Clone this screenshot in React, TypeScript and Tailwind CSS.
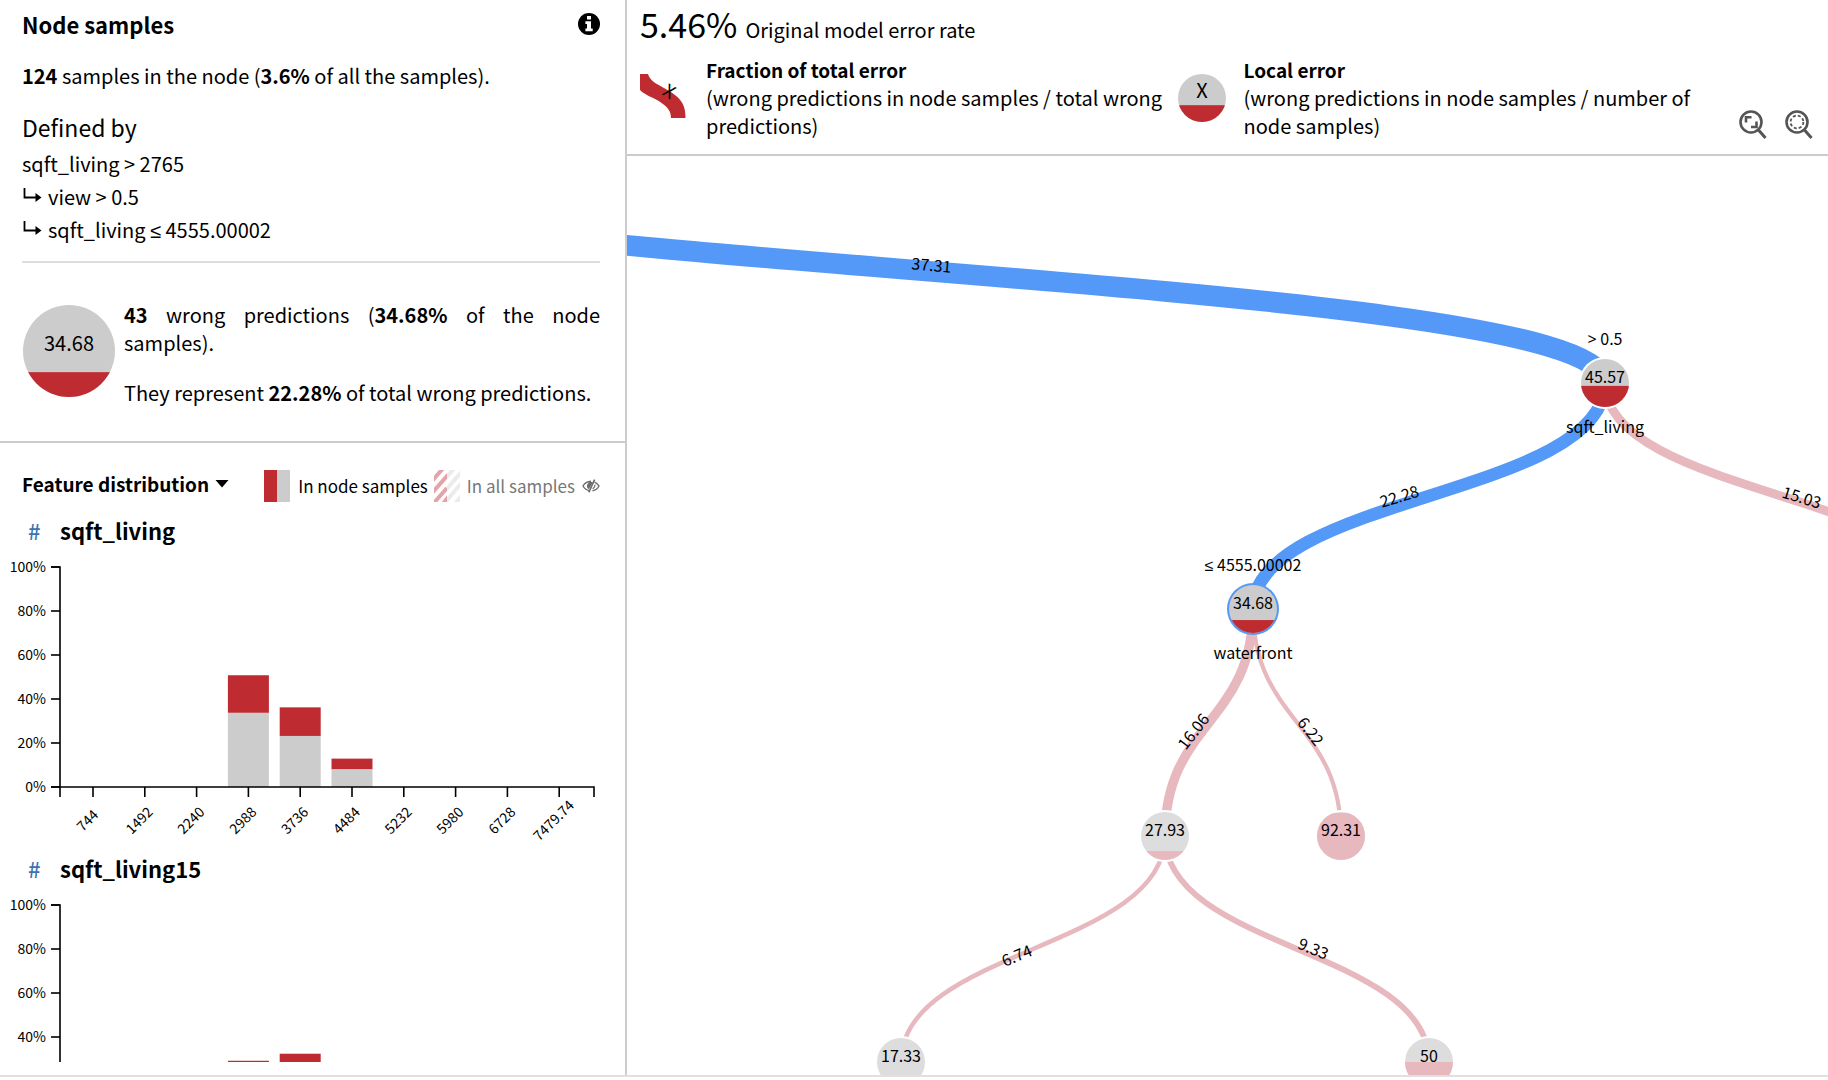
import React from "react";

const RED = "#be2c31";
const GREY = "#cccccc";
const BLUE = "#5499f7";
const PINK = "#e8b8bf";
const PALE = "#dddddd";

/* ---------- shared drawings ---------- */

type GaugeProps = {
  cx: number;
  cy: number;
  r: number;
  level: number;
  id: string;
  faded?: boolean;
};

function Gauge({ cx, cy, r, level, id, faded }: GaugeProps) {
  const top = cy + r - level * 2 * r;
  return (
    <g>
      <clipPath id={id}>
        <circle cx={cx} cy={cy} r={r} />
      </clipPath>
      <circle cx={cx} cy={cy} r={r} fill={faded ? PALE : GREY} />
      <rect
        x={cx - r}
        y={top}
        width={2 * r}
        height={level * 2 * r}
        fill={faded ? PINK : RED}
        clipPath={`url(#${id})`}
      />
    </g>
  );
}

function InfoIcon() {
  return (
    <svg viewBox="0 0 22 22" className="size-[22px]" aria-hidden="true">
      <circle cx="11" cy="11" r="11" fill="#000" />
      <path
        fill="#fff"
        d="M9 3h4v3.4H9zM7.4 8.2H13v7.2h1.7v2.8H7.4v-2.8H9V11H7.4z"
      />
    </svg>
  );
}

function BranchArrow() {
  return (
    <svg viewBox="0 0 20 14" className="-mt-1 h-[14px] w-[20px]" aria-hidden="true">
      <path d="M2.500 0v9.500H14" fill="none" stroke="#000" strokeWidth="1.800" />
      <path d="M13.500 5l6 4.500-6 4.500z" fill="#000" />
    </svg>
  );
}

function HalfEyeIcon() {
  return (
    <svg viewBox="0 0 18 14" className="h-[14px] w-[18px]" aria-hidden="true">
      <path
        d="M8 11.7C4.700 11.400 2.300 9.500 1 7c1.500-2.700 4.300-4.500 8-4.700M12.600 3.100C14.600 3.900 16.100 5.300 17 7c-1.300 2.500-3.500 4.200-6.500 4.700"
        fill="none"
        stroke="#6b6b6b"
        strokeWidth="1.400"
      />
      <path d="M10.800 3.300A4 4 0 0 0 6.800 10.200z" fill="#6b6b6b" />
      <path d="M12.600 .7L6.800 13.300" stroke="#6b6b6b" strokeWidth="1.600" />
      <path d="M13 5.600c.1 2-.8 3.300-2.400 4" fill="none" stroke="#6b6b6b" strokeWidth="1.200" />
    </svg>
  );
}

function ZoomFitIcon() {
  return (
    <svg viewBox="0 0 28 30" className="h-[30px] w-[28px]" aria-hidden="true">
      <g fill="none" stroke="#555" strokeWidth="2.600">
        <circle cx="12" cy="12" r="10.500" />
        <path d="M19.500 20l7 8" strokeWidth="3" />
        <path d="M7 12.500V7.200h5.500M17.500 11.500v5.500H12" />
      </g>
    </svg>
  );
}

function ZoomSelectionIcon() {
  return (
    <svg viewBox="0 0 28 30" className="h-[30px] w-[28px]" aria-hidden="true">
      <g fill="none" stroke="#555" strokeWidth="2.600">
        <circle cx="12" cy="12" r="10.500" />
        <path d="M19.500 20l7 8" strokeWidth="3" />
        <circle cx="12" cy="12" r="6.400" strokeWidth="1.800" strokeDasharray="3 2.030" />
      </g>
    </svg>
  );
}

/* ---------- left panel ---------- */

const BINS = ["744", "1492", "2240", "2988", "3736", "4484", "5232", "5980", "6728", "7479.74"];
const PERCENTS = [100, 80, 60, 40, 20, 0];

type Bar = { bin: number; total: number; right: number };

function Histogram({ name, bars }: { name: string; bars: Bar[] }) {
  const y = (p: number) => 228 - p * 2.2;
  const x = (i: number) => 93 + i * 51.8;
  return (
    <section>
      <h3 className="flex h-7 items-center gap-[17px] pl-7 text-[22px] font-bold leading-7">
        <span className="w-[15px] font-medium text-[#3b74b0]">#</span>
        {name}
      </h3>
      <svg className="mt-[15px] h-[295px] w-full overflow-visible" role="img" aria-label={`${name} distribution`}>
        {bars.map((b) => (
          <g key={b.bin}>
            <rect x={x(b.bin) - 20.5} y={y(b.total)} width="41" height={(b.total - b.right) * 2.2} fill={RED} />
            <rect x={x(b.bin) - 20.5} y={y(b.right)} width="41" height={b.right * 2.2} fill={GREY} />
          </g>
        ))}
        <path d="M51 8h9v220H51" fill="none" stroke="#000" strokeWidth="1.600" />
        <path d="M60 238v-10h534v10" fill="none" stroke="#000" strokeWidth="1.600" />
        {PERCENTS.map((p) => (
          <g key={p}>
            <path d={`M51 ${y(p)}h9`} stroke="#000" strokeWidth="1.600" />
            <text x="46" y={y(p) + 5} textAnchor="end" fontSize="14">
              {p}%
            </text>
          </g>
        ))}
        {BINS.map((b, i) => (
          <g key={b}>
            <path d={`M${x(i)} 228v10`} stroke="#000" strokeWidth="1.600" />
            <text textAnchor="middle" fontSize="14" transform={`translate(${x(i) - 2} 265) rotate(-45)`}>
              {b}
            </text>
          </g>
        ))}
      </svg>
    </section>
  );
}

function SidePanel() {
  return (
    <aside className="flex w-[627px] shrink-0 flex-col border-r-2 border-[#cccccc]">
      <div className="border-b-2 border-[#cccccc] pt-[10px] pr-[25px] pb-[34px] pl-[22px]">
        <div className="flex h-7 items-center justify-between">
          <h2 className="text-[22px] font-bold leading-7">Node samples</h2>
          <button type="button" aria-label="About node samples">
            <InfoIcon />
          </button>
        </div>
        <p className="mt-6">
          <b>124</b> samples in the node (<b>3.6%</b> of all the samples).
        </p>
        <h3 className="mt-[23px] text-[23px] leading-7">Defined by</h3>
        <ul className="mt-[6px] leading-[33px]">
          <li>sqft_living &gt; 2765</li>
          <li className="flex items-center gap-[6px]">
            <BranchArrow />
            view &gt; 0.5
          </li>
          <li className="flex items-center gap-[6px]">
            <BranchArrow />
            <span>
              sqft_living <span className="font-['Noto_Sans',sans-serif] leading-none">≤</span> 4555.00002
            </span>
          </li>
        </ul>
        <hr className="mt-[15px] border-t-2 border-[#dddddd]" />
        <div className="mt-[38px] flex gap-2">
          <svg viewBox="0 0 94 94" className="mt-[3px] size-[94px] shrink-0" role="img" aria-label="34.68% local error">
            <Gauge id="summary" cx={47} cy={47} r={46} level={0.27} />
            <text x="47" y="47" textAnchor="middle" fontSize="20">
              34.68
            </text>
          </svg>
          <div className="flex-1 space-y-[22px] text-justify">
            <p>
              <b>43</b> wrong predictions (<b>34.68%</b> of the node samples).
            </p>
            <p>
              They represent <b>22.28%</b> of total wrong predictions.
            </p>
          </div>
        </div>
      </div>
      <div className="flex h-[73px] items-center justify-between pt-2 pr-[25px] pl-[22px]">
        <button type="button" className="flex items-center gap-[6px] text-[19px] font-bold">
          Feature distribution
          <svg viewBox="0 0 14 8" className="h-2 w-[14px]" aria-hidden="true">
            <path d="M.5 0h13L7 7.500z" />
          </svg>
        </button>
        <div className="flex items-center gap-[6px] pt-1 text-[17px]">
          <span className="flex items-center gap-2">
            <svg viewBox="0 0 26 32" className="h-8 w-[26px]" aria-hidden="true">
              <path d="M0 0h13v32H0z" fill={RED} />
              <path d="M13 0h13v32H13z" fill={GREY} />
            </svg>
            In node samples
          </span>
          <button type="button" className="flex items-center gap-[7px] text-[#777777]">
            <svg viewBox="0 0 26 32" className="h-8 w-[26px]" aria-hidden="true">
              <defs>
                <clipPath id="halfA">
                  <path d="M0 0h13v32H0z" />
                </clipPath>
                <clipPath id="halfB">
                  <path d="M13 0h13v32H13z" />
                </clipPath>
              </defs>
              <path
                d="M-2 11L11 -4M-2 23L20 -2M-2 35L13 18M8 35L15 26"
                stroke="#e3a3a9"
                strokeWidth="4"
                clipPath="url(#halfA)"
              />
              <path
                d="M11 9L22 -4M10 22L30 -1M8 36L30 10M20 35L30 23"
                stroke="#ebebeb"
                strokeWidth="4"
                clipPath="url(#halfB)"
              />
            </svg>
            In all samples
            <HalfEyeIcon />
          </button>
        </div>
      </div>
      <div className="mb-[13px] min-h-0 flex-1 overflow-hidden">
        <Histogram
          name="sqft_living"
          bars={[
            { bin: 3, total: 50.8, right: 33.7 },
            { bin: 4, total: 36.2, right: 23.2 },
            { bin: 5, total: 12.9, right: 8 },
          ]}
        />
        <Histogram
          name="sqft_living15"
          bars={[
            { bin: 3, total: 29.2, right: 18 },
            { bin: 4, total: 32.4, right: 20 },
          ]}
        />
      </div>
    </aside>
  );
}

/* ---------- tree ---------- */

type TreeNode = {
  id: string;
  x: number;
  y: number;
  value?: string;
  level?: number;
  sign?: string;
  threshold?: string;
  split?: string;
  faded?: boolean;
  selected?: boolean;
};

const NODES: TreeNode[] = [
  { id: "root", x: -405, y: 1 },
  { id: "a", x: 978, y: 227, value: "45.57", level: 0.44, sign: ">", threshold: "0.5", split: "sqft_living" },
  { id: "b", x: 626, y: 453, value: "34.68", level: 0.27, sign: "≤", threshold: "4555.00002", split: "waterfront", selected: true },
  { id: "g", x: 1330, y: 453 },
  { id: "c", x: 538, y: 680, value: "27.93", level: 0.185, faded: true },
  { id: "d", x: 714, y: 680, value: "92.31", level: 0.98, faded: true },
  { id: "e", x: 274, y: 906, value: "17.33", level: 0.08, faded: true },
  { id: "f", x: 802, y: 906, value: "50", level: 0.5, faded: true },
];

type Link = { from: string; to: string; value: string; x: number; y: number; angle: number; active?: boolean };

const LINKS: Link[] = [
  { from: "root", to: "a", value: "37.31", x: 304, y: 115, angle: 5, active: true },
  { from: "a", to: "b", value: "22.28", x: 774, y: 346, angle: -17, active: true },
  { from: "a", to: "g", value: "15.03", x: 1173, y: 347, angle: 17 },
  { from: "b", to: "c", value: "16.06", x: 571, y: 579, angle: -52 },
  { from: "b", to: "d", value: "6.22", x: 679, y: 579, angle: 52 },
  { from: "c", to: "e", value: "6.74", x: 392, y: 805, angle: -23 },
  { from: "c", to: "f", value: "9.33", x: 684, y: 798, angle: 23 },
];

const find = (id: string) => NODES.find((n) => n.id === id)!;

function Tree() {
  return (
    <svg className="block size-full" role="img" aria-label="Error tree" fontSize="16">
      {LINKS.map((l) => {
        const s = find(l.from);
        const t = find(l.to);
        const m = (s.y + t.y) / 2;
        return (
          <path
            key={l.to}
            d={`M${s.x} ${s.y}C${s.x} ${m} ${t.x} ${m} ${t.x} ${t.y}`}
            fill="none"
            stroke={l.active ? BLUE : PINK}
            strokeWidth={Number(l.value) * 0.53 + 0.9}
          />
        );
      })}
      {LINKS.map((l) => (
        <text key={l.to} textAnchor="middle" transform={`translate(${l.x} ${l.y}) rotate(${l.angle})`}>
          {l.value}
        </text>
      ))}
      {NODES.filter((n) => n.value).map((n) => (
        <g key={n.id}>
          <circle cx={n.x} cy={n.y} r="26" fill={n.selected ? BLUE : "#fff"} />
          <Gauge id={n.id} cx={n.x} cy={n.y} r={24} level={n.level ?? 0} faded={n.faded} />
          <text x={n.x} y={n.y} textAnchor="middle">
            {n.value}
          </text>
          {n.threshold && (
            <text x={n.x} y={n.y - 38} textAnchor="middle">
              <tspan className="font-['Noto_Sans',sans-serif]">{n.sign}</tspan> {n.threshold}
            </text>
          )}
          <text x={n.x} y={n.y + 50} textAnchor="middle">
            {n.split}
          </text>
        </g>
      ))}
    </svg>
  );
}

function TreeHeader() {
  return (
    <header className="border-b-2 border-[#cccccc] pb-[14px] pl-[13px]">
      <p className="flex items-baseline gap-2 pt-[2px]">
        <span className="text-[34px] leading-[44px]">5.46%</span>
        <span>Original model error rate</span>
      </p>
      <div className="mt-[10px] flex items-end pr-[15px]">
        <div className="flex flex-1 items-center gap-5 self-start">
          <svg viewBox="0 0 46 44" className="mb-1 h-11 w-[46px] shrink-0 overflow-visible" aria-hidden="true">
            <path
              d="M0 0h8C10 7 17 10 24 14C38 22 46 28 45.500 44H31C31 35 25 31 17 26C9 22 4 20 0 16z"
              fill={RED}
            />
            <text textAnchor="middle" fontSize="18" transform="translate(26 23) rotate(31)">
              X
            </text>
          </svg>
          <p>
            <b className="block text-[19px]">Fraction of total error</b>
            (wrong predictions in node samples / total wrong predictions)
          </p>
        </div>
        <div className="flex flex-1 items-center gap-[18px] self-start">
          <svg viewBox="0 0 48 48" className="size-12 shrink-0" aria-hidden="true">
            <Gauge id="legend" cx={24} cy={24} r={24} level={0.35} />
            <text x="24" y="24" textAnchor="middle" fontSize="20">
              X
            </text>
          </svg>
          <p>
            <b className="block text-[19px]">Local error</b>
            (wrong predictions in node samples / number of node samples)
          </p>
        </div>
        <div className="ml-6 flex gap-[18px]">
          <button type="button" aria-label="Zoom to fit">
            <ZoomFitIcon />
          </button>
          <button type="button" aria-label="Zoom to selection">
            <ZoomSelectionIcon />
          </button>
        </div>
      </div>
    </header>
  );
}

export default function App() {
  return (
    <div className="h-screen bg-white pb-[3px] font-['Noto_Sans_CJK_SC',sans-serif] text-[20px] leading-7 text-black">
      <div className="flex h-full overflow-hidden border-b-2 border-[#e0e0e0]">
        <SidePanel />
        <main className="flex min-w-0 flex-1 flex-col">
          <TreeHeader />
          <div className="min-h-0 flex-1 overflow-hidden">
            <Tree />
          </div>
        </main>
      </div>
    </div>
  );
}
